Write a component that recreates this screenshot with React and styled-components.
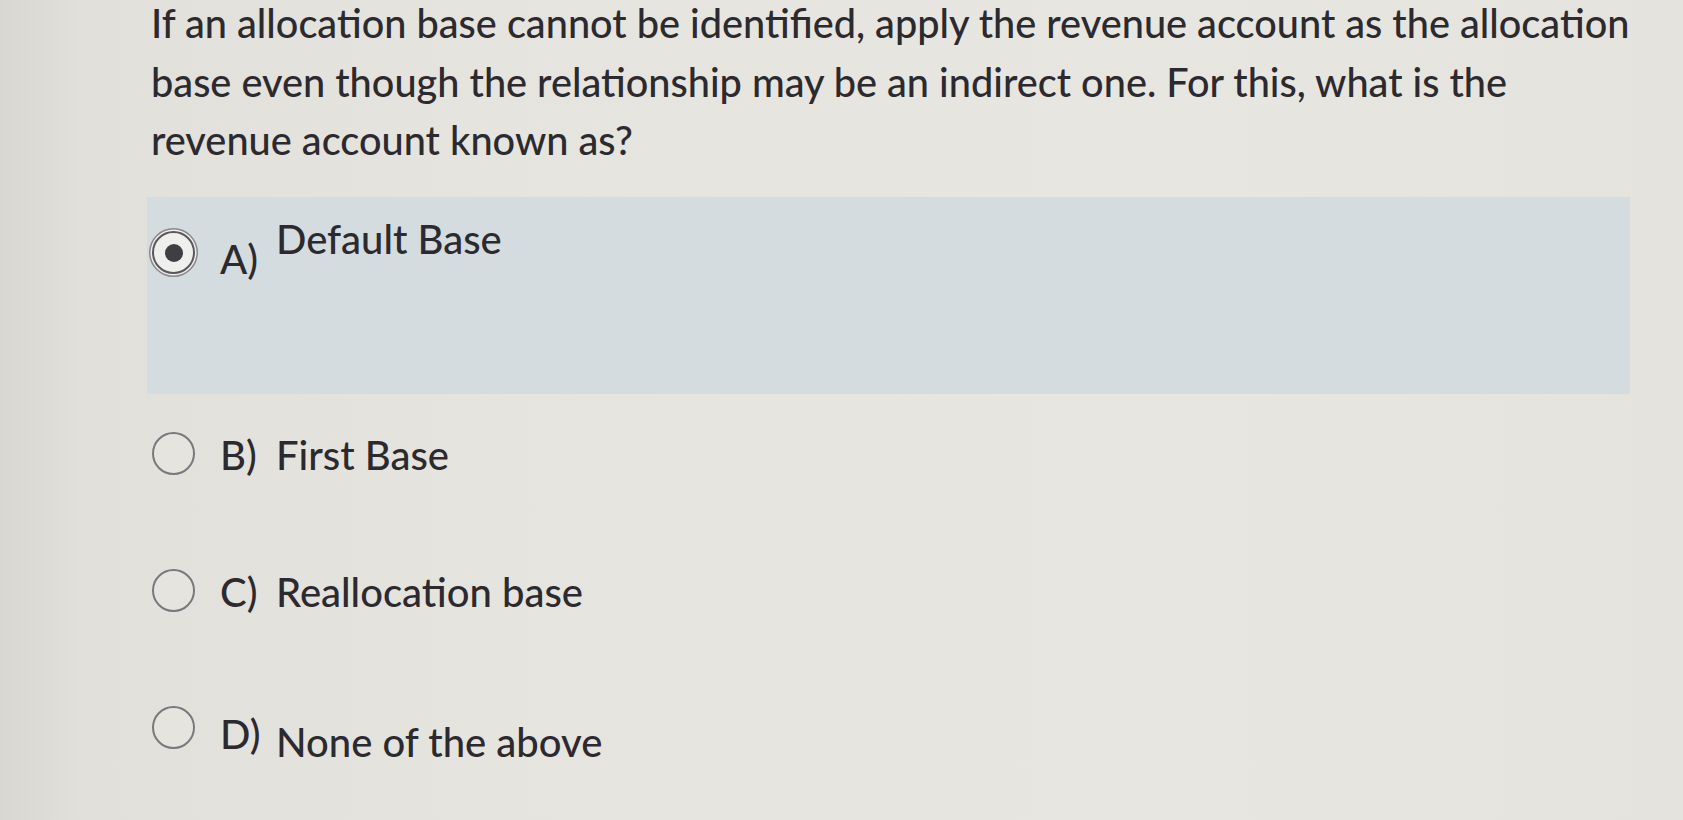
import React from "react";
import styled, { createGlobalStyle } from "styled-components";

const GlobalStyle = createGlobalStyle`
  html, body {
    margin: 0;
    padding: 0;
  }
  body {
    width: 1683px;
    height: 820px;
    overflow: hidden;
    background: linear-gradient(90deg, #d9d7d1 0%, #e2e0da 5%, #e6e4de 30%, #e8e6e0 70%, #e5e3dd 100%);
    font-family: Lato, "Open Sans", sans-serif;
    color: #2c2a2f;
  }
`;

const Page = styled.main`
  padding: 0 0 0 147px;
  display: flex;
  flex-direction: column;
`;

const Question = styled.p`
  margin: -6px 0 0;
  padding-left: 4px;
  width: 1486px;
  font-size: 39.7px;
  font-weight: 500;
  line-height: 58.5px;
`;

const Options = styled.div`
  margin-top: 27px;
  display: flex;
  flex-direction: column;
  width: 1483px;
`;

const Option = styled.label`
  display: flex;
  align-items: flex-start;
  box-sizing: border-box;
  height: ${(p) => (p.$selected ? "197px" : "137px")};
  padding: ${(p) => (p.$selected ? "32px" : "36px")} 0 0 5px;
  background: ${(p) => (p.$selected ? "#d4dcdf" : "transparent")};
  font-size: 40px;
  font-weight: 500;
  line-height: 48px;
  cursor: pointer;
`;

const Radio = styled.span`
  flex: none;
  box-sizing: border-box;
  width: 43px;
  height: 43px;
  margin-top: 2.5px;
  border-radius: 50%;
  border: 2.5px solid ${(p) => (p.$checked ? "#5a585c" : "#7a787c")};
  background: ${(p) => (p.$checked ? "#efefed" : "rgba(255, 255, 255, 0.12)")};
  display: flex;
  align-items: center;
  justify-content: center;
  box-shadow: ${(p) => (p.$checked ? "0 0 0 1.5px #eeeeec, 0 0 0 3px #8a888c" : "none")};

  &::after {
    content: "";
    display: ${(p) => (p.$checked ? "block" : "none")};
    width: 18px;
    height: 18px;
    border-radius: 50%;
    background: #403e43;
  }
`;

const Letter = styled.span`
  flex: none;
  width: 56px;
  margin-left: 25px;
  margin-top: ${(p) => p.$shift}px;
`;

const AnswerText = styled.span`
  margin-top: ${(p) => p.$shift}px;
`;

const answers = [
  { letter: "A)", text: "Default Base", selected: true, letterShift: 6, textShift: -14 },
  { letter: "B)", text: "First Base", letterShift: 1, textShift: 1 },
  { letter: "C)", text: "Reallocation base", letterShift: 1, textShift: 1 },
  { letter: "D)", text: "None of the above", letterShift: 6, textShift: 14 },
];

export default function App() {
  return (
    <>
      <GlobalStyle />
      <Page>
        <Question>
          If an allocation base cannot be identified, apply the revenue account as the
          allocation base even though the relationship may be an indirect one. For this,
          what is the revenue account known as?
        </Question>
        <Options role="radiogroup">
          {answers.map((a) => (
            <Option key={a.letter} $selected={a.selected}>
              <Radio $checked={a.selected} role="radio" aria-checked={!!a.selected} />
              <Letter $shift={a.letterShift}>{a.letter}</Letter>
              <AnswerText $shift={a.textShift}>{a.text}</AnswerText>
            </Option>
          ))}
        </Options>
      </Page>
    </>
  );
}
